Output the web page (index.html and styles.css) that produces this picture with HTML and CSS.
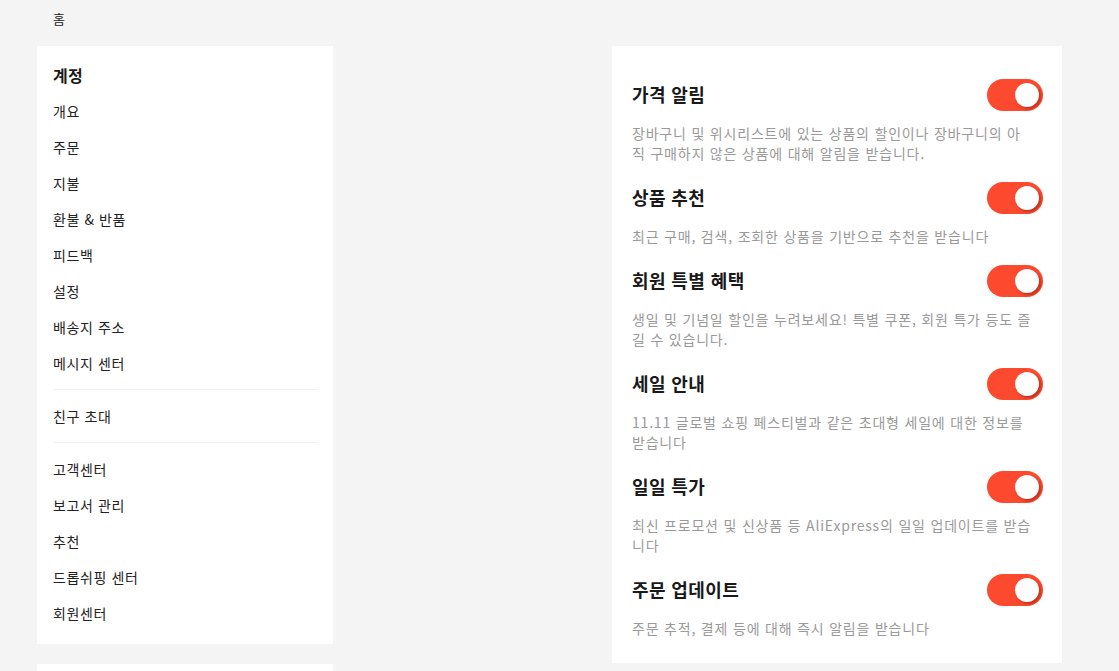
FILE: index.html
```html
<!DOCTYPE html>
<html lang="ko">
<head>
    <meta charset="UTF-8">
    <meta name="viewport" content="width=device-width, initial-scale=1.0">
    <title>알림 설정</title>
    <link rel="stylesheet" href="styles.css">
</head>
<body>
    <div class="crumb">홈</div>
    <div class="page">
        <div class="sidebar">
            <div class="side-card">
                <div class="side-title">계정</div>
                <a class="side-item">개요</a>
                <a class="side-item">주문</a>
                <a class="side-item">지불</a>
                <a class="side-item">환불 &amp; 반품</a>
                <a class="side-item">피드백</a>
                <a class="side-item">설정</a>
                <a class="side-item">배송지 주소</a>
                <a class="side-item">메시지 센터</a>
                <div class="side-divider"></div>
                <a class="side-item">친구 초대</a>
                <div class="side-divider"></div>
                <a class="side-item">고객센터</a>
                <a class="side-item">보고서 관리</a>
                <a class="side-item">추천</a>
                <a class="side-item">드롭쉬핑 센터</a>
                <a class="side-item">회원센터</a>
            </div>
            <div class="side-card side-card-next"></div>
        </div>

        <div class="main-card">
            <div class="setting">
                <div class="setting-head">
                    <div class="setting-title">가격 알림</div>
                    <span class="toggle on"><span class="knob"></span></span>
                </div>
                <div class="setting-desc">장바구니 및 위시리스트에 있는 상품의 할인이나 장바구니의 아직 구매하지 않은 상품에 대해 알림을 받습니다.</div>
            </div>
            <div class="setting">
                <div class="setting-head">
                    <div class="setting-title">상품 추천</div>
                    <span class="toggle on"><span class="knob"></span></span>
                </div>
                <div class="setting-desc">최근 구매, 검색, 조회한 상품을 기반으로 추천을 받습니다</div>
            </div>
            <div class="setting">
                <div class="setting-head">
                    <div class="setting-title">회원 특별 혜택</div>
                    <span class="toggle on"><span class="knob"></span></span>
                </div>
                <div class="setting-desc">생일 및 기념일 할인을 누려보세요! 특별 쿠폰, 회원 특가 등도 즐길 수 있습니다.</div>
            </div>
            <div class="setting">
                <div class="setting-head">
                    <div class="setting-title">세일 안내</div>
                    <span class="toggle on"><span class="knob"></span></span>
                </div>
                <div class="setting-desc">11.11 글로벌 쇼핑 페스티벌과 같은 초대형 세일에 대한 정보를 받습니다</div>
            </div>
            <div class="setting">
                <div class="setting-head">
                    <div class="setting-title">일일 특가</div>
                    <span class="toggle on"><span class="knob"></span></span>
                </div>
                <div class="setting-desc">최신 프로모션 및 신상품 등 AliExpress의 일일 업데이트를 받습니다</div>
            </div>
            <div class="setting">
                <div class="setting-head">
                    <div class="setting-title">주문 업데이트</div>
                    <span class="toggle on"><span class="knob"></span></span>
                </div>
                <div class="setting-desc">주문 추적, 결제 등에 대해 즉시 알림을 받습니다</div>
            </div>
        </div>
    </div>
</body>
</html>
```

FILE: styles.css
```css
* {
    padding: 0;
    margin: 0;
    box-sizing: border-box;
}

body {
    font-family: "Noto Sans CJK KR", "Open Sans", Arial, sans-serif;
    background-color: #f4f4f4;
    color: #222;
    overflow: hidden;
}

.crumb {
    height: 46px;
    padding: 9px 0 0 53px;
    font-size: 13px;
    line-height: 20px;
    color: #191919;
}

.page {
    display: flex;
    justify-content: space-between;
    align-items: flex-start;
    padding: 0 57px 0 37px;
}

.sidebar {
    display: flex;
    flex-direction: column;
    gap: 20px;
    width: 296px;
}

.side-card {
    display: flex;
    flex-direction: column;
    padding: 11px 16px 13px;
    background-color: #fff;
}

.side-card-next {
    height: 80px;
}

.side-title {
    font-size: 16px;
    font-weight: bold;
    line-height: 36px;
    letter-spacing: 0.4px;
    color: #191919;
}

.side-item {
    font-size: 14px;
    line-height: 36px;
    letter-spacing: 0.6px;
    color: #222;
    cursor: pointer;
}

.side-divider {
    height: 1px;
    margin: 8px 0;
    background-color: #f0f0f0;
}

.main-card {
    width: 450px;
    padding: 33px 19px 6px 20px;
    background-color: #fff;
}

.setting {
    padding-bottom: 19px;
}

.setting-head {
    display: flex;
    justify-content: space-between;
    align-items: center;
    height: 32px;
}

.setting-title {
    margin-top: -3px;
    font-size: 18px;
    font-weight: bold;
    letter-spacing: 0.4px;
    color: #191919;
}

.setting-desc {
    margin-top: 12px;
    padding-right: 10px;
    font-size: 14px;
    line-height: 20px;
    letter-spacing: 0.8px;
    color: #999;
}

.toggle {
    position: relative;
    display: inline-block;
    width: 56px;
    height: 32px;
    border-radius: 16px;
    background-color: #ccc;
}

.toggle.on {
    background-color: #fd4a2f;
}

.knob {
    position: absolute;
    top: 4px;
    left: 4px;
    width: 24px;
    height: 24px;
    border-radius: 50%;
    background-color: #fff;
    box-shadow: 2px 2px 3px rgba(120, 20, 0, 0.45);
}

.toggle.on .knob {
    left: 28px;
}
```
